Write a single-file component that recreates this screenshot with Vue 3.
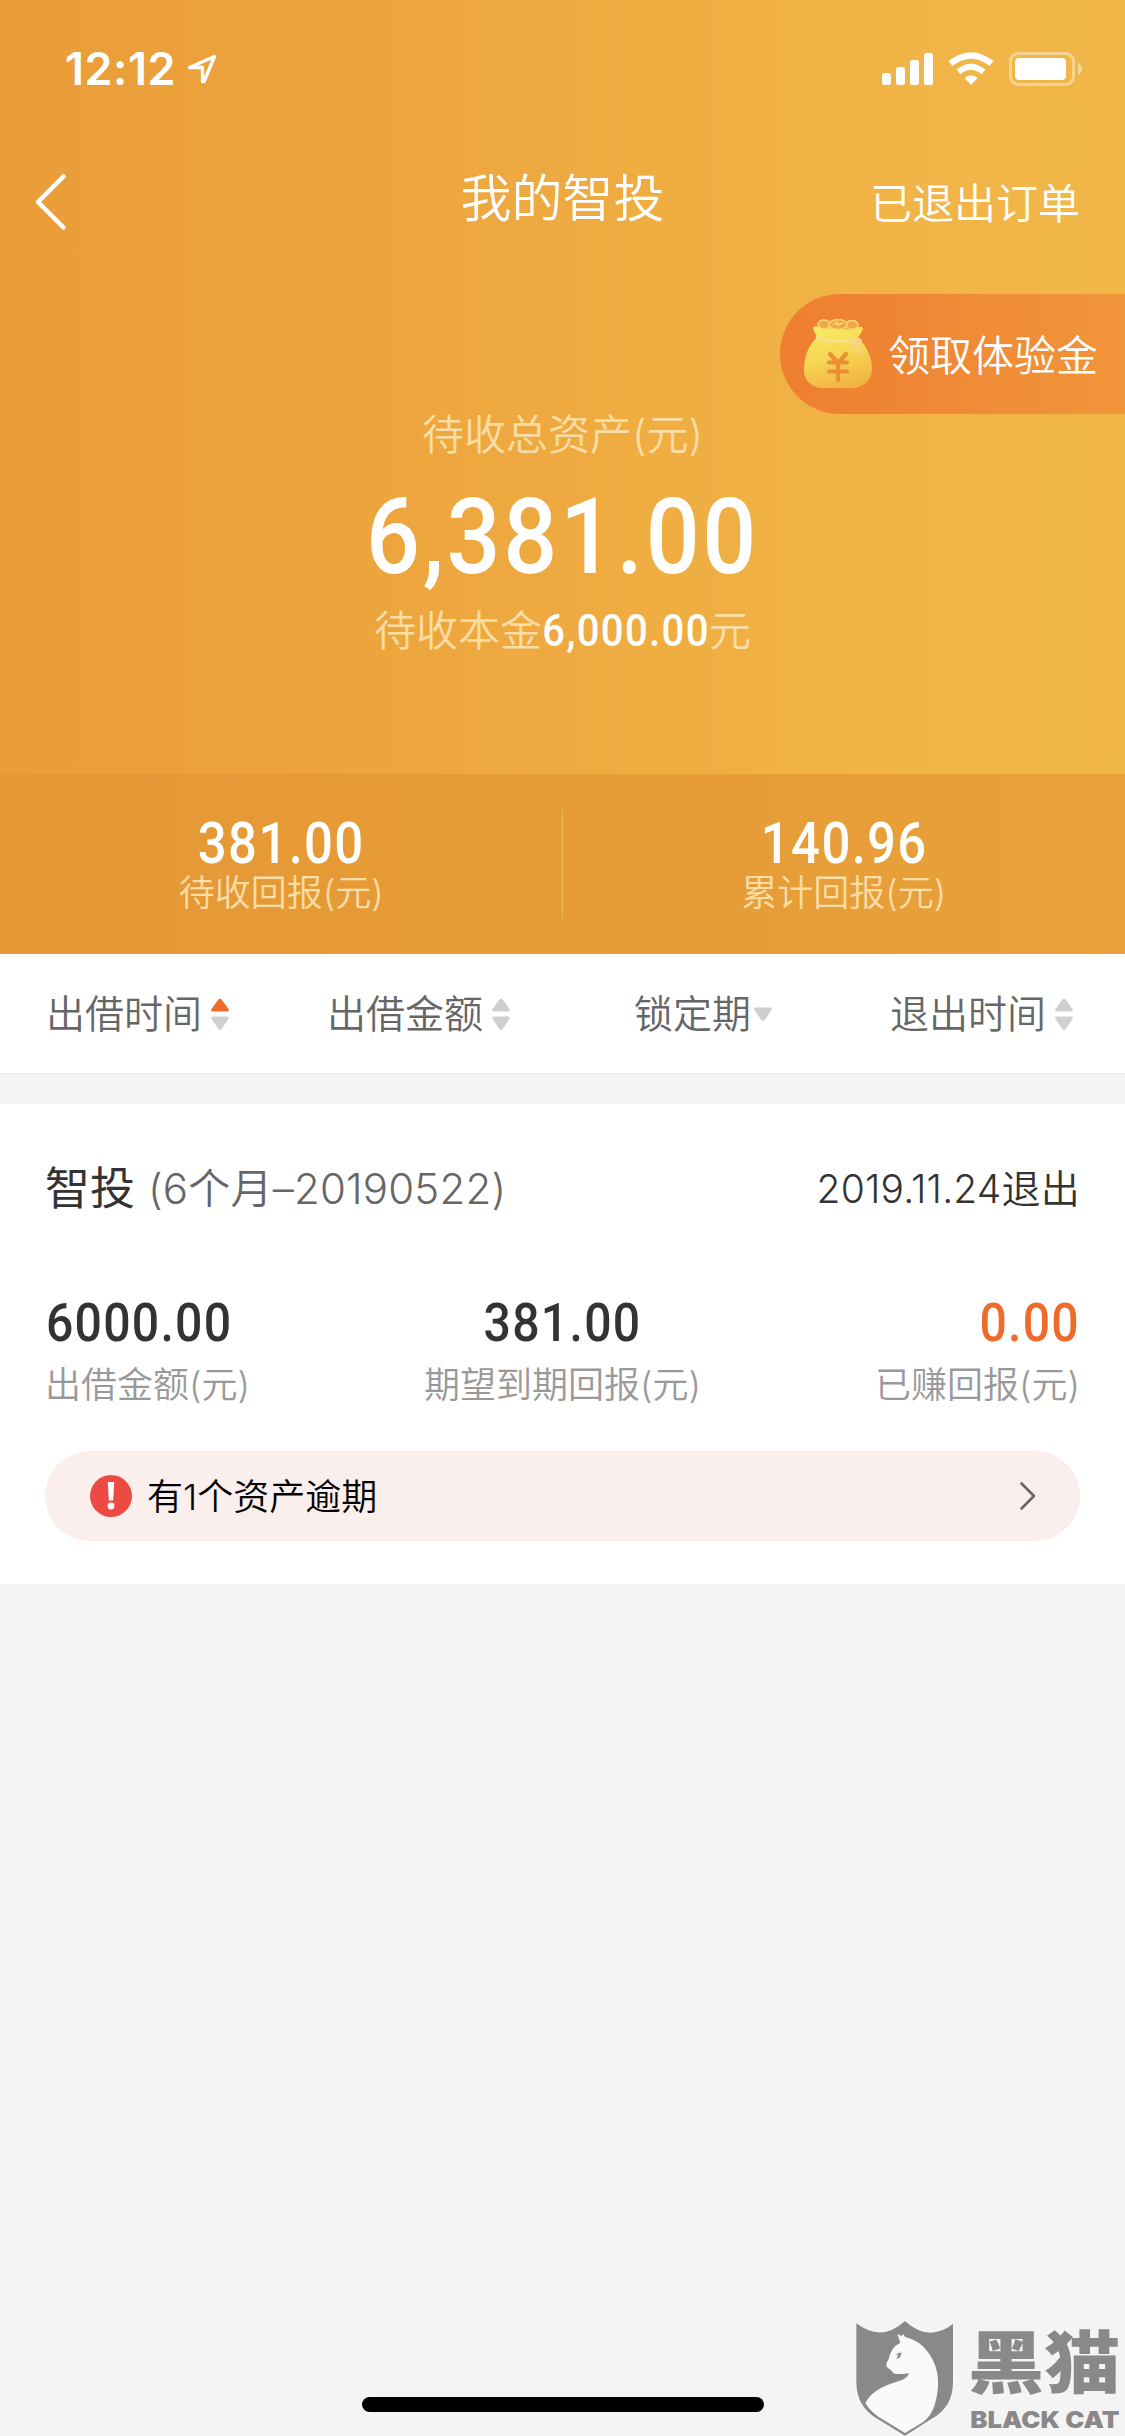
<script setup>
	import { ref, reactive } from 'vue'

	const asset = reactive({
		total: '6,381.00',
		principal: '6,000.00'
	})

	const stats = ref([
		{ id: 1, num: '381.00', label: '待收回报(元)' },
		{ id: 2, num: '140.96', label: '累计回报(元)' }
	])

	// 排序栏, type: both 上下箭头, down 只有下箭头
	const sorts = ref([
		{ id: 1, name: '出借时间', type: 'both' },
		{ id: 2, name: '出借金额', type: 'both' },
		{ id: 3, name: '锁定期', type: 'down' },
		{ id: 4, name: '退出时间', type: 'both' }
	])
	const active = ref(1)

	const orders = ref([
		{
			id: 20190522,
			name: '智投',
			term: '(6个月–20190522)',
			date: '2019.11.24退出',
			overdue: 1,
			cols: [
				{ num: '6000.00', label: '出借金额(元)' },
				{ num: '381.00', label: '期望到期回报(元)' },
				{ num: '0.00', label: '已赚回报(元)', hot: true }
			]
		}
	])
</script>
<template>
	<div class="page">
		<div class="header">
			<!-- 状态栏 -->
			<div class="status">
				<span class="time">12:12</span>
				<svg class="locate" width="30" height="30" viewBox="0 0 30 30">
					<path d="M27.500 2.500 L2.500 13.500 H15.500 V27.500 H17 L27.500 2.500 Z" fill="none" stroke="#fff" stroke-width="3.400" stroke-linejoin="round" />
				</svg>
				<svg class="icons" width="202" height="36" viewBox="0 0 202 36">
					<g fill="#fff">
						<rect x="1" y="22" width="9" height="12" rx="2.5" />
						<rect x="15" y="16" width="9" height="18" rx="2.5" />
						<rect x="29" y="9" width="9" height="25" rx="2.5" />
						<rect x="43" y="2" width="9" height="32" rx="2.5" />
						<path d="M90 34 L83.5 27 Q90 21.500 96.500 27 Z" />
					</g>
					<path d="M69.500 12.500 Q90 -3.500 110.500 12.500" fill="none" stroke="#fff" stroke-width="6.500" />
					<path d="M77.500 20.800 Q90 11 102.500 20.800" fill="none" stroke="#fff" stroke-width="6" />
					<rect x="129.500" y="2.500" width="63" height="31" rx="8" fill="none" stroke="#fff" stroke-opacity=".4" stroke-width="3" />
					<rect x="134" y="7" width="51" height="22" rx="4" fill="#fff" />
					<path d="M197 12 Q201 14 201 18 Q201 22 197 24 Z" fill="#fff" fill-opacity=".45" />
				</svg>
			</div>
			<div class="nav">
				<svg class="back" width="34" height="58" viewBox="0 0 34 58">
					<path d="M30.500 3.500 L5 29 L30.500 54.500" fill="none" stroke="#fff" stroke-width="4.500" stroke-linecap="round" stroke-linejoin="round" />
				</svg>
				<span class="title">我的智投</span>
				<span class="quit">已退出订单</span>
			</div>
			<div class="gift">
				<svg width="70" height="70" viewBox="0 0 70 70">
					<defs>
						<linearGradient id="bag" x1="0.3" y1="0" x2="0.6" y2="1">
							<stop offset="0" stop-color="#f8ea62" />
							<stop offset=".5" stop-color="#f6d553" />
							<stop offset="1" stop-color="#f2b342" />
						</linearGradient>
					</defs>
					<g fill="#f1a848" stroke="#fad77a" stroke-width="1.500">
						<ellipse cx="21" cy="5.500" rx="6" ry="4.500" />
						<ellipse cx="49" cy="6" rx="6" ry="4.500" />
						<ellipse cx="35" cy="5.500" rx="9" ry="5" />
					</g>
					<path d="M30 6 L34 3 L35 6 L40 4" fill="none" stroke="#f9e06c" stroke-width="1.500" />
					<path d="M10 9 Q12 6 15 8 Q20 12 26 9 Q34 12 43 10 Q50 13 56 8 Q60 7 60 10 Q58 15 55 18 Q69 33 69 50 Q69 64 53 69 H17 Q1 65 1 51 Q1 31 14 18 Q12 15 10 9 Z" fill="url(#bag)" />
					<path d="M14 18 Q33 25 52 20" fill="none" stroke="#fae08e" stroke-width="2.500" stroke-linecap="round" />
					<path d="M52 22 Q46 18 46 23 Q47 26 52 22 Q57 18 58 22 Q58 26 52 22 L48 31 M53 23 L54 33 M54 23 L60 35" fill="none" stroke="#f9d384" stroke-width="2" stroke-linecap="round" />
					<path d="M27 35 L35 44 L43 35 M26 43.500 H44 M26 52.500 H44 M35 44 V61" fill="none" stroke="#ea8f34" stroke-width="4.200" stroke-linecap="round" />
				</svg>
				<span>领取体验金</span>
			</div>
			<div class="asset">
				<div class="tip">待收总资产(元)</div>
				<div class="total din">{{ asset.total }}</div>
				<div class="tip principal">待收本金<b class="din">{{ asset.principal }}</b>元</div>
			</div>
			<div class="stats">
				<div class="stat" v-for="item in stats" :key="item.id">
					<div class="din">{{ item.num }}</div>
					<p>{{ item.label }}</p>
				</div>
			</div>
		</div>

		<div class="sorts">
			<div class="sort" :class="item.type" v-for="item in sorts" :key="item.id" @click="active = item.id">
				<span>{{ item.name }}</span>
				<svg v-if="item.type === 'both'" width="20" height="34" viewBox="0 0 20 34">
					<path d="M10 1.500 Q11 1.500 12 3 L18.500 12 Q19.500 14.500 17 14.500 H3 Q.5 14.500 1.500 12 L8 3 Q9 1.500 10 1.500 Z" :fill="active === item.id ? '#ed6b2b' : '#cfcfcf'" />
					<path d="M10 33 Q11 33 12 31.500 L18.500 22 Q19.500 19.500 17 19.500 H3 Q.5 19.500 1.500 22 L8 31.500 Q9 33 10 33 Z" fill="#cfcfcf" />
				</svg>
				<svg v-else width="20" height="16" viewBox="0 0 20 16">
					<path d="M10 15 Q11 15 12 13.500 L18.500 4 Q19.500 1.500 17 1.500 H3 Q.5 1.500 1.500 4 L8 13.500 Q9 15 10 15 Z" fill="#cfcfcf" />
				</svg>
			</div>
		</div>

		<!-- 订单列表 -->
		<div class="order" v-for="item in orders" :key="item.id">
			<div class="order-head">
				<span class="name">{{ item.name }}</span>
				<span class="term">{{ item.term }}</span>
				<span class="date">{{ item.date }}</span>
			</div>
			<div class="cols">
				<div class="col" v-for="col in item.cols" :key="col.label" :class="{ hot: col.hot }">
					<div class="din">{{ col.num }}</div>
					<p>{{ col.label }}</p>
				</div>
			</div>
			<div class="alert" v-if="item.overdue > 0">
				<svg width="42" height="42" viewBox="0 0 42 42">
					<circle cx="21" cy="21" r="21" fill="#ec4a42" />
					<path d="M17.800 7 H24.200 L23.200 25.500 H18.800 Z" fill="#fff" />
					<circle cx="21" cy="31" r="3.400" fill="#fff" />
				</svg>
				<span>有{{ item.overdue }}个资产逾期</span>
				<svg class="more" width="18" height="32" viewBox="0 0 18 32">
					<path d="M2.500 3.500 L15 16 L2.500 28.500" fill="none" stroke="#666" stroke-width="2.600" stroke-linecap="round" stroke-linejoin="round" />
				</svg>
			</div>
		</div>

		<div class="home-bar"></div>
		<!-- 黑猫水印 -->
		<div class="mark">
			<svg width="98" height="115" viewBox="33 33 294 345">
				<path d="M34 40 Q110 98 180 33 Q250 98 324 42 V215 Q324 292 260 326 L180 377 L97 326 Q34 290 34 215 Z" fill="#8b8889" />
				<path d="M157 72 L170 78 L174 72 L181 81 Q240 95 268 160 Q290 215 269 285 Q258 318 236 335 L180 369 L100 320 Q72 300 61 279 Q82 236 160 214 Q184 208 193 190 Q170 194 148 191 Q136 178 125 170 Q122 160 131 148 Q137 112 166 98 Z" fill="#fafafa" />
				<path d="M151 138 Q155 127 169 128 Q169 145 154 146 Q160 138 160 132 Q156 134 151 138 Z" fill="#8b8889" />
			</svg>
			<div class="mark-text">
				<strong>黑猫</strong>
				<em>BLACK CAT</em>
			</div>
		</div>
	</div>
</template>
<style>
	body {
	margin: 0;
	background: #f4f4f4;
	}
</style>
<style scoped>
	.page {
	position: relative;
	width: 1125px;
	height: 2436px;
	overflow: hidden;
	background: #f4f4f4;
	font-family: Inter, 'Noto Sans CJK SC', sans-serif;
	font-weight: 350;
	color: #333;
	}
	.page svg {
	display: block;
	flex: none;
	}
	.page p {
	margin: 0;
	}
	.din {
	font-family: Roboto, 'Liberation Sans', sans-serif;
	font-weight: 500;
	transform: scaleX(.9);
	}
	.header {
	display: flex;
	flex-direction: column;
	height: 954px;
	background: linear-gradient(90deg, #ea9c38 0%, #eeaa40 50%, #f1b346 75%, #f2b749 100%);
	color: #fff;
	}
	.status {
	display: flex;
	align-items: center;
	height: 138px;
	padding: 0 42px 0 65px;
	box-sizing: border-box;
	}
	.status .time {
	width: 122px;
	font-size: 45px;
	font-weight: 600;
	line-height: 60px;
	letter-spacing: .5px;
	}
	.status .icons {
	margin-left: auto;
	}
	.nav {
	display: grid;
	grid-template-columns: 1fr auto 1fr;
	align-items: center;
	height: 130px;
	padding: 0 45px 0 33px;
	}
	.nav .back {
	margin-top: -2px;
	}
	.nav .title {
	font-size: 51px;
	line-height: 60px;
	margin: 0 0 8px 12px;
	}
	.nav .quit {
	padding-top: 2px;
	font-size: 42px;
	line-height: 60px;
	text-align: right;
	}
	.gift {
	display: flex;
	align-items: center;
	align-self: flex-end;
	width: 345px;
	height: 120px;
	margin-top: 26px;
	padding-left: 23px;
	box-sizing: border-box;
	border-radius: 60px 0 0 60px;
	background: linear-gradient(90deg, #ee7e30, #f1953a);
	}
	.gift span {
	margin-left: 15px;
	padding-top: 3px;
	font-size: 42px;
	line-height: 60px;
	white-space: nowrap;
	}
	.asset {
	flex: 1;
	text-align: center;
	}
	.tip {
	font-size: 42px;
	line-height: 60px;
	margin-top: -9px;
	color: #fbdda6;
	}
	.asset .total {
	margin-top: 12px;
	font-size: 105.500px;
	line-height: 120px;
	letter-spacing: 3px;
	}
	.asset .principal {
	margin-top: 4px;
	}
	.principal .din {
	display: inline-block;
	margin: 0 -10px 0 -9px;
	font-size: 44.500px;
	letter-spacing: 1.500px;
	color: #fff;
	}
	.stats {
	display: flex;
	height: 180px;
	background: linear-gradient(90deg, #e49836, #e69c37 50%, #e8a13a);
	}
	.stat {
	position: relative;
	flex: 1;
	padding-top: 39px;
	text-align: center;
	}
	.stat + .stat::before {
	content: '';
	position: absolute;
	left: -1px;
	top: 36px;
	width: 1px;
	height: 108px;
	background: #efbc62;
	}
	.stat .din {
	font-size: 56.500px;
	line-height: 62px;
	letter-spacing: 1.500px;
	}
	.stat p {
	margin-top: -2px;
	font-size: 36px;
	line-height: 40px;
	color: #fbdda6;
	}
	.sorts {
	display: flex;
	align-items: center;
	height: 119px;
	padding: 0 46px;
	background: #fff;
	border-bottom: 1px solid #ececec;
	}
	.sort {
	display: flex;
	align-items: center;
	color: #666;
	font-size: 39px;
	line-height: 60px;
	}
	.sort svg {
	margin-left: 8px;
	}
	.sort.down svg {
	margin-left: 2px;
	}
	.sort:nth-child(2) {
	margin-left: 97px;
	}
	.sort:nth-child(3) {
	margin-left: 123px;
	}
	.sort:nth-child(4) {
	margin-left: 117px;
	}
	.order {
	height: 480px;
	margin-top: 30px;
	padding: 0 45px;
	box-sizing: border-box;
	background: #fff;
	}
	.order-head {
	display: flex;
	align-items: center;
	padding-top: 55px;
	line-height: 60px;
	}
	.order-head .name {
	font-size: 45px;
	font-weight: 400;
	}
	.order-head .term {
	margin-left: 13px;
	font-size: 42px;
	letter-spacing: .2px;
	color: #666;
	}
	.order-head .date {
	margin-left: auto;
	font-size: 39px;
	letter-spacing: .2px;
	}
	.cols {
	display: grid;
	grid-template-columns: 1fr 1fr 1fr;
	margin-top: 73px;
	text-align: center;
	}
	.col .din {
	font-size: 53.500px;
	line-height: 62px;
	letter-spacing: 1.400px;
	}
	.col p {
	margin-top: 1px;
	font-size: 36px;
	line-height: 60px;
	color: #999;
	}
	.col:first-child {
	text-align: left;
	}
	.col:first-child .din {
	padding-left: 1px;
	transform-origin: left;
	}
	.col:last-child {
	text-align: right;
	}
	.col:last-child .din {
	transform-origin: right;
	}
	.col.hot .din {
	color: #ed6b2b;
	}
	.alert {
	display: flex;
	align-items: center;
	height: 90px;
	margin-top: 36px;
	padding: 0 43px 0 45px;
	border-radius: 45px;
	background: #fbefee;
	color: #000;
	font-size: 36px;
	}
	.alert span {
	margin-left: 15px;
	padding-bottom: 5px;
	}
	.alert .more {
	margin-left: auto;
	}
	.home-bar {
	position: absolute;
	left: 362px;
	bottom: 24px;
	width: 402px;
	height: 15px;
	border-radius: 8px;
	background: #000;
	}
	.mark {
	position: absolute;
	right: 0;
	bottom: 0;
	display: flex;
	width: 269px;
	height: 115px;
	color: #8b8889;
	}
	.mark-text {
	display: flex;
	flex-direction: column;
	align-items: flex-start;
	margin-left: 14px;
	}
	.mark-text strong {
	font-size: 68px;
	font-weight: 900;
	line-height: 85px;
	white-space: nowrap;
	transform: scaleX(1.12);
	transform-origin: left;
	}
	.mark-text em {
	padding-left: 2px;
	font-size: 23px;
	font-style: normal;
	font-weight: 900;
	line-height: 28px;
	white-space: nowrap;
	transform: scaleX(1.12);
	transform-origin: left;
	}
</style>
